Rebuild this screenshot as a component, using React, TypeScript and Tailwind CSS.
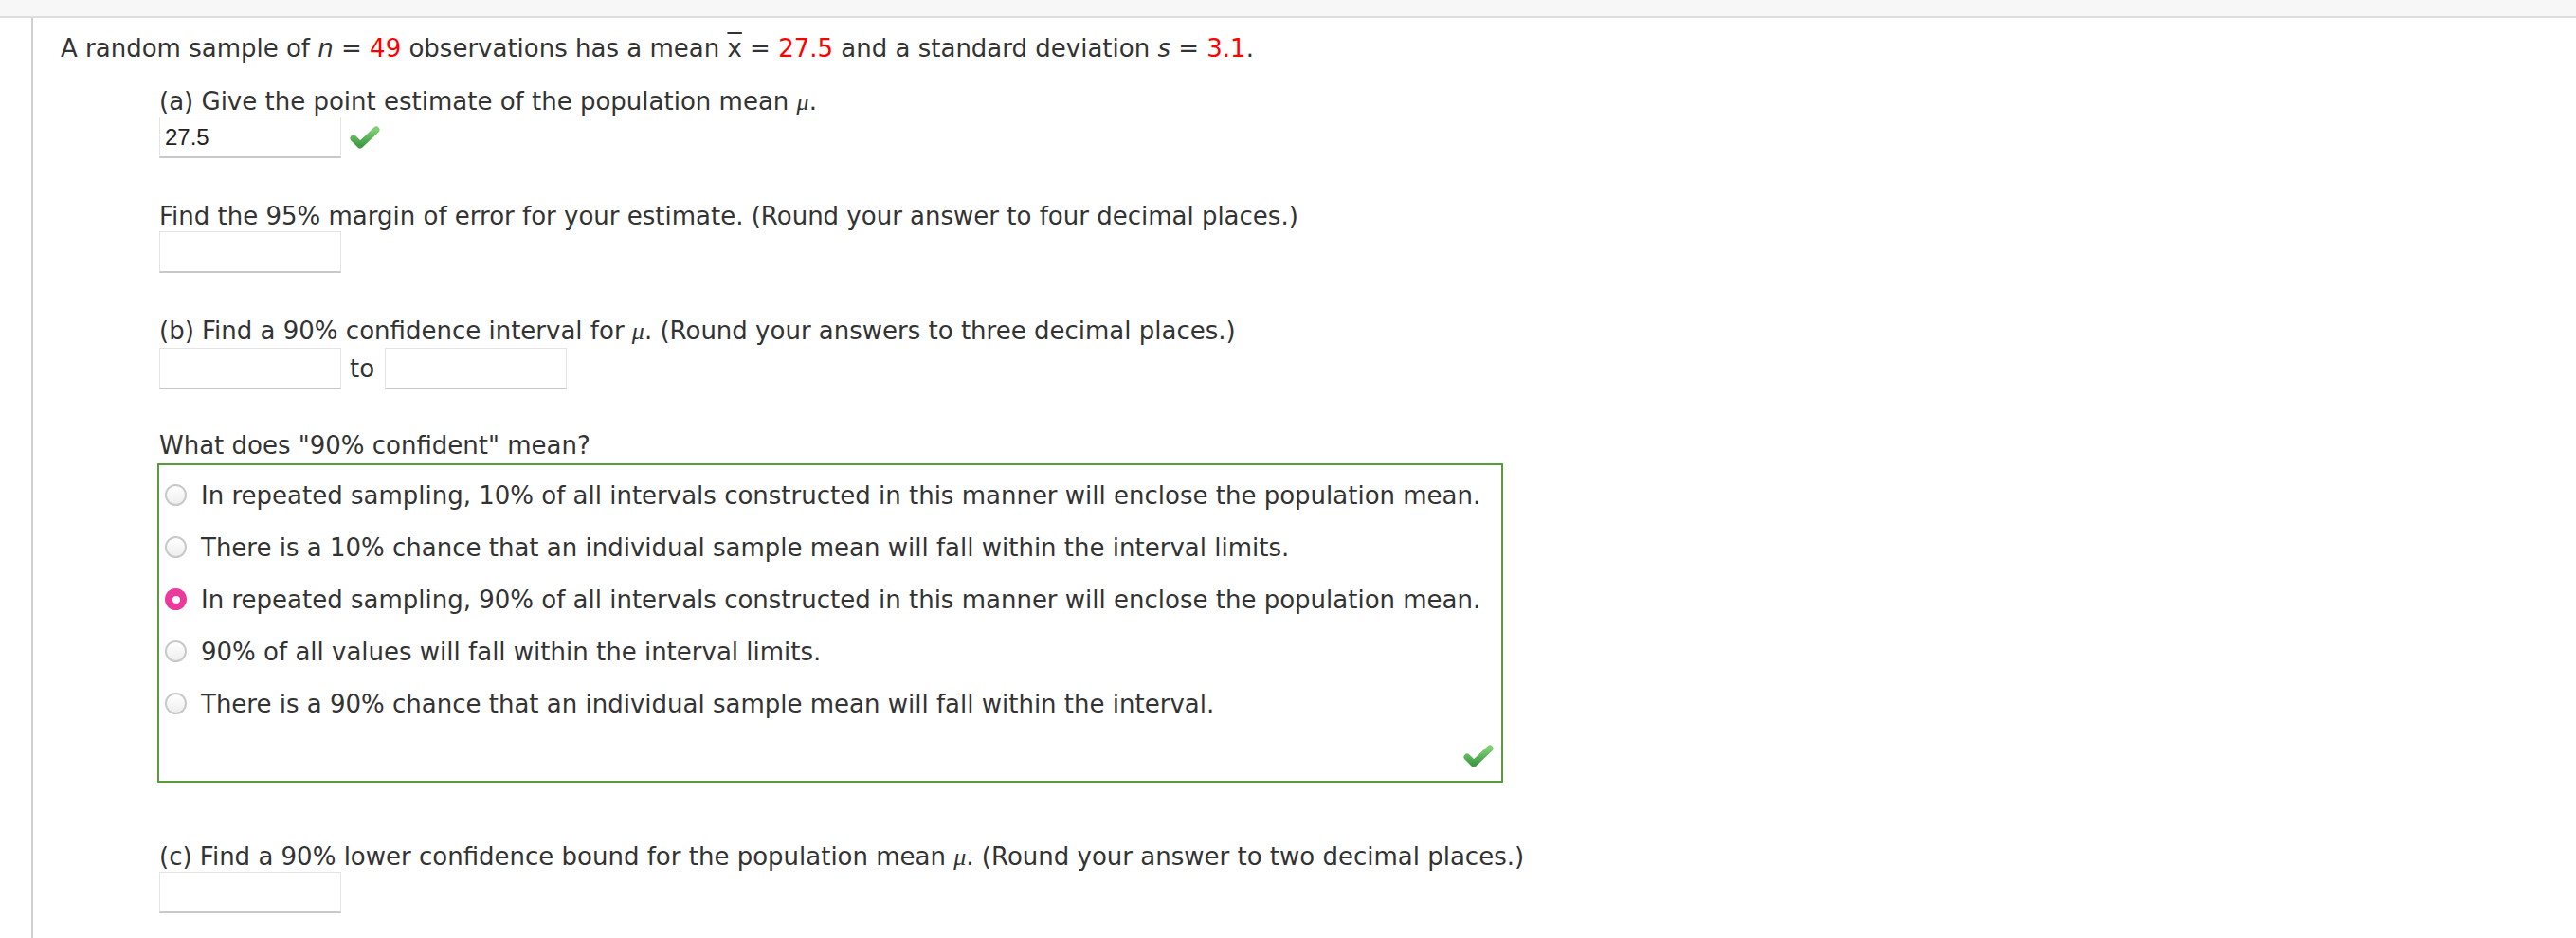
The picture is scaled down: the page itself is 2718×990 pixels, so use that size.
import React from "react";

function Check() {
  return (
    <svg width="32" height="26" viewBox="0 0 32 26" className="block">
      <defs>
        <linearGradient id="chk" x1="0" y1="0" x2="0" y2="1">
          <stop offset="0" stopColor="#7fcf75" />
          <stop offset="1" stopColor="#3f9c44" />
        </linearGradient>
      </defs>
      <path
        d="M4 14 L11 21 L28 5"
        fill="none"
        stroke="url(#chk)"
        strokeWidth="7"
        strokeLinecap="round"
        strokeLinejoin="round"
      />
    </svg>
  );
}

function Mu() {
  return <span className="font-['Liberation_Serif',serif] italic">μ</span>;
}

function Red({ children }: { children: React.ReactNode }) {
  return <span className="text-[#ff0000]">{children}</span>;
}

function Field({ value }: { value?: string }) {
  return (
    <div className="box-border h-[44px] w-[192px] border border-[#e4e4e4] border-b-2 border-b-[#c8c8c8] bg-white pl-[5px] flex items-center font-['Liberation_Sans',Arial,sans-serif] text-[24px] text-[#222]">
      {value}
    </div>
  );
}

function Radio({ checked }: { checked?: boolean }) {
  if (checked) {
    return (
      <span className="flex h-[23px] w-[23px] shrink-0 items-center justify-center rounded-full bg-[#ea3a9c]">
        <span className="h-[8px] w-[8px] rounded-full bg-white" />
      </span>
    );
  }
  return (
    <span className="box-border h-[23px] w-[23px] shrink-0 rounded-full border-2 border-[#c9c9c9] bg-gradient-to-b from-[#ffffff] to-[#eeeeee]" />
  );
}

const options = [
  "In repeated sampling, 10% of all intervals constructed in this manner will enclose the population mean.",
  "There is a 10% chance that an individual sample mean will fall within the interval limits.",
  "In repeated sampling, 90% of all intervals constructed in this manner will enclose the population mean.",
  "90% of all values will fall within the interval limits.",
  "There is a 90% chance that an individual sample mean will fall within the interval.",
];

export default function App() {
  return (
    <div className="min-h-screen bg-white text-[#333] font-['DejaVu_Sans',Verdana,sans-serif]">
      <div className="h-[19px] bg-[#f7f7f7] border-b-2 border-[#dedede]" />
      <div className="ml-[33px] min-h-[971px] border-l-2 border-[#d0d0d0] pl-[29px] pt-[17px] text-[26px] leading-[30px]">
        <p>
          A random sample of <i>n</i> = <Red>49</Red> observations has a mean{" "}
          <span className="overline">x</span> = <Red>27.5</Red> and a standard deviation{" "}
          <i>s</i> = <Red>3.1</Red>.
        </p>

        <div className="ml-[104px]">
          {/* (a) */}
          <p className="mt-[26px]">
            (a) Give the point estimate of the population mean <Mu />.
          </p>
          <div className="flex items-center gap-[9px]">
            <Field value="27.5" />
            <Check />
          </div>

          <p className="mt-[46px]">
            Find the 95% margin of error for your estimate. (Round your answer to four decimal places.)
          </p>
          <div className="mt-[1px]">
            <Field />
          </div>

          {/* (b) */}
          <p className="mt-[46px]">
            (b) Find a 90% confidence interval for <Mu />. (Round your answers to three decimal places.)
          </p>
          <div className="mt-[2px] flex items-center">
            <Field />
            <span className="ml-[9px] mr-[11px]">to</span>
            <Field />
          </div>

          <p className="mt-[44px]">What does "90% confident" mean?</p>
          <div className="-ml-[2px] mt-[4px] w-[1420px] border-2 border-[#5a9c3c]">
            <div className="pt-[4px] pl-[6px]">
              {options.map((o, i) => (
                <div key={i} className="flex h-[55px] items-center gap-[15px]">
                  <Radio checked={i === 2} />
                  <span>{o}</span>
                </div>
              ))}
            </div>
            <div className="flex justify-end pt-[15px] pb-[13px] pr-[8px]">
              <Check />
            </div>
          </div>

          {/* (c) */}
          <p className="mt-[63px]">
            (c) Find a 90% lower confidence bound for the population mean <Mu />. (Round your answer to two decimal places.)
          </p>
          <Field />
        </div>
      </div>
    </div>
  );
}
